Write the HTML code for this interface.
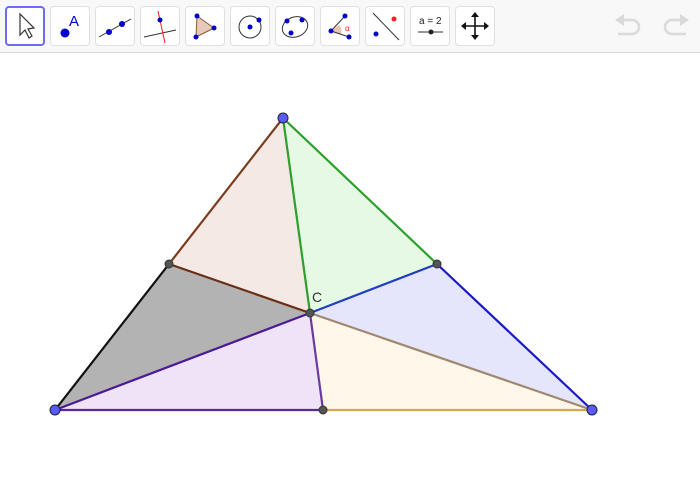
<!DOCTYPE html>
<html><head><meta charset="utf-8"><style>
html,body{margin:0;padding:0;width:700px;height:500px;background:#fff;overflow:hidden;font-family:"Liberation Sans",sans-serif}
.tb{position:absolute;left:0;top:0;width:700px;height:52px;background:#f8f8f8;border-bottom:1px solid #dcdcdc}
.b{position:absolute;top:6px;width:38px;height:38px;background:#fff;border:1px solid #e0e0e0;border-radius:4px}
.b.sel{border:2px solid #6b6bf5;width:36px;height:36px}
.b svg{position:absolute;left:0;top:0}
</style></head><body>
<div class="tb">
<div class="b sel" style="left:5px"><svg width="36" height="36"><path d="M13 6 L13 27 L18 22 L22 30 L25 28 L21 21 L27 20 Z" fill="#fff" stroke="#333" stroke-width="1.2"/></svg></div>
<div class="b" style="left:50px"><svg width="38" height="38"><circle cx="14" cy="26" r="4.5" fill="#00c"/><text x="18" y="19" font-size="15" fill="#00c" font-family="Liberation Sans">A</text></svg></div>
<div class="b" style="left:95px"><svg width="38" height="38"><line x1="3" y1="30" x2="35" y2="12" stroke="#333"/><circle cx="13" cy="25" r="3" fill="#00c"/><circle cx="26" cy="17" r="3" fill="#00c"/></svg></div>
<div class="b" style="left:140px"><svg width="38" height="38"><line x1="3" y1="30" x2="35" y2="23" stroke="#333"/><line x1="17" y1="4" x2="24" y2="36" stroke="#e22"/><circle cx="19" cy="13" r="2.5" fill="#00c"/></svg></div>
<div class="b" style="left:185px"><svg width="38" height="38"><polygon points="11,9 28,21 10,30" fill="#e6cbbd" stroke="#8b5a2b"/><circle cx="11" cy="9" r="2.5" fill="#00c"/><circle cx="28" cy="21" r="2.5" fill="#00c"/><circle cx="10" cy="30" r="2.5" fill="#00c"/></svg></div>
<div class="b" style="left:230px"><svg width="38" height="38"><circle cx="19" cy="20" r="11" fill="none" stroke="#333"/><circle cx="19" cy="20" r="2.5" fill="#00c"/><circle cx="28" cy="13" r="2.5" fill="#00c"/></svg></div>
<div class="b" style="left:275px"><svg width="38" height="38"><ellipse cx="19" cy="20" rx="13" ry="10" fill="none" stroke="#333" transform="rotate(-20 19 20)"/><circle cx="11" cy="14" r="2.5" fill="#00c"/><circle cx="26" cy="13" r="2.5" fill="#00c"/><circle cx="15" cy="26" r="2.5" fill="#00c"/></svg></div>
<div class="b" style="left:320px"><svg width="38" height="38"><path d="M10 24 L18 18 A10 10 0 0 1 20 27 Z" fill="#f0c0b0"/><line x1="10" y1="24" x2="24" y2="9" stroke="#333"/><line x1="10" y1="24" x2="28" y2="30" stroke="#333"/><circle cx="10" cy="24" r="2.5" fill="#00c"/><circle cx="24" cy="9" r="2.5" fill="#00c"/><circle cx="28" cy="30" r="2.5" fill="#00c"/><text x="24" y="24" font-size="8" fill="#e22">α</text></svg></div>
<div class="b" style="left:365px"><svg width="38" height="38"><line x1="7" y1="6" x2="33" y2="33" stroke="#333"/><circle cx="10" cy="27" r="2.5" fill="#00c"/><circle cx="28" cy="12" r="2.5" fill="#e22"/></svg></div>
<div class="b" style="left:410px"><svg width="38" height="38"><text x="8" y="17" font-size="10" fill="#222" font-family="Liberation Sans">a = 2</text><line x1="7" y1="25" x2="32" y2="25" stroke="#333"/><circle cx="20" cy="25" r="2.5" fill="#222"/></svg></div>
<div class="b" style="left:455px"><svg width="38" height="38"><g stroke="#111" stroke-width="1.6"><line x1="19" y1="7" x2="19" y2="31"/><line x1="7" y1="19" x2="31" y2="19"/></g><g fill="#111"><polygon points="19,5 15,10 23,10"/><polygon points="19,33 15,28 23,28"/><polygon points="5,19 10,15 10,23"/><polygon points="33,19 28,15 28,23"/></g></svg></div>
<svg style="position:absolute;left:612px;top:12px" width="80" height="28"><g fill="none" stroke="#dadada" stroke-width="2.6"><path d="M8 8 H20 A7 7 0 0 1 20 22 H6"/><path d="M72 8 H60 A7 7 0 0 0 60 22 H74"/></g><polygon points="3,8 12,2 12,14" fill="#dadada"/><polygon points="77,8 68,2 68,14" fill="#dadada"/></svg>
</div>
<svg style="position:absolute;left:0;top:0" width="700" height="500">
<polygon points="283,118 169,264 310,313" fill="#f4e9e4"/>
<polygon points="283,118 310,313 437,264" fill="#e6f9e4"/>
<polygon points="310,313 437,264 592,410" fill="#e5e5fc"/>
<polygon points="310,313 592,410 323,410" fill="#fff8ea"/>
<polygon points="310,313 323,410 55,410" fill="#eee3f7"/>
<polygon points="310,313 55,410 169,264" fill="#b3b3b3"/>
<g stroke-width="2.2" fill="none">
<line x1="283" y1="118" x2="169" y2="264" stroke="#7a3c1c"/>
<line x1="169" y1="264" x2="310" y2="313" stroke="#6a2e14"/>
<line x1="283" y1="118" x2="310" y2="313" stroke="#2ca02c"/>
<line x1="283" y1="118" x2="437" y2="264" stroke="#2ca02c"/>
<line x1="310" y1="313" x2="437" y2="264" stroke="#1f3fbf"/>
<line x1="437" y1="264" x2="592" y2="410" stroke="#1a1ac8"/>
<line x1="310" y1="313" x2="592" y2="410" stroke="#a08870"/>
<line x1="323" y1="410" x2="592" y2="410" stroke="#d4a84a"/>
<line x1="310" y1="313" x2="323" y2="410" stroke="#6a3aa0"/>
<line x1="55" y1="410" x2="323" y2="410" stroke="#5a2a9a"/>
<line x1="310" y1="313" x2="55" y2="410" stroke="#4a1a9a"/>
<line x1="55" y1="410" x2="169" y2="264" stroke="#111"/>
</g>
<g stroke="#333" stroke-width="1">
<circle cx="169" cy="264" r="4" fill="#555"/>
<circle cx="437" cy="264" r="4" fill="#555"/>
<circle cx="323" cy="410" r="4" fill="#555"/>
<circle cx="310" cy="313" r="4" fill="#555"/>
<circle cx="283" cy="118" r="5" fill="#5a5aff" stroke="#223"/>
<circle cx="55" cy="410" r="5" fill="#5a5aff" stroke="#223"/>
<circle cx="592" cy="410" r="5" fill="#5a5aff" stroke="#223"/>
</g>
<text x="312" y="302" font-size="14" fill="#333" font-family="Liberation Sans">C</text>
</svg>
</body></html>
